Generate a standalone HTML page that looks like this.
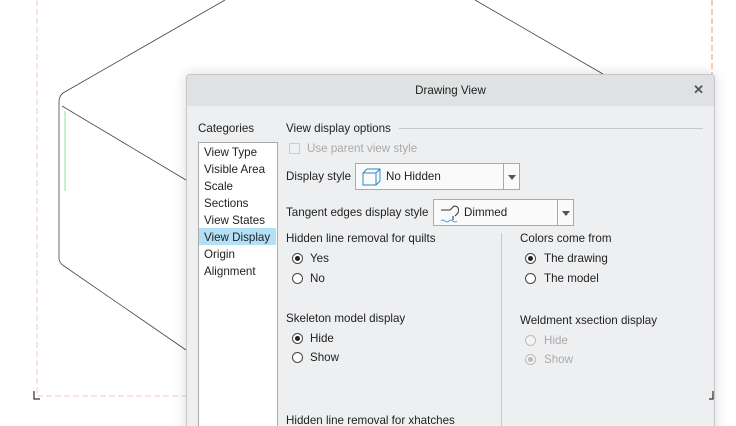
<!DOCTYPE html>
<html style="overflow:hidden;height:426px"><head><style>
body{margin:0;width:736px;height:426px;background:#fff;position:relative;overflow:hidden;font-family:"Liberation Sans",sans-serif;font-size:11.6px;color:#222}
.a{position:absolute;white-space:nowrap}
.dlg{position:absolute;left:186px;top:74px;width:527px;height:360px;background:#eeeff1;border:1px solid #c4c6c9;border-radius:4px 4px 0 0;box-shadow:0 0 14px rgba(0,0,0,.15)}
.tb{position:absolute;left:0;top:0;right:0;height:31px;background:#dfe1e3;border-radius:4px 4px 0 0}
.rad{position:absolute;width:11px;height:11px;border:1px solid #444;border-radius:50%;background:#fff;box-sizing:border-box}
.rad.on::after{content:"";position:absolute;left:2px;top:2px;width:5px;height:5px;border-radius:50%;background:#222}
.dis{color:#aaa}
.rad.d{border-color:#bbb;background:#f3f3f3}
.rad.d.on::after{background:#bbb}
.combo{position:absolute;background:#fafafa;border:1px solid #aaa;box-sizing:border-box}
.arr{position:absolute;top:0;bottom:0;width:15px;border-left:1px solid #aaa}
.arr::after{content:"";position:absolute;left:4px;top:11px;border:4px solid transparent;border-top:5px solid #555;border-bottom:0}
</style></head><body>
<svg class="a" style="left:0;top:0" width="736" height="426">
<line x1="37" y1="0" x2="37" y2="396" stroke="#f3c9c2" stroke-dasharray="6,3"/>
<line x1="37" y1="396" x2="186" y2="396" stroke="#f3c9c2" stroke-dasharray="6,3"/>
<line x1="712" y1="0" x2="712" y2="74" stroke="#f59a6a" stroke-dasharray="6,3"/>
<path d="M225 0 L63 93 Q59 96 59 102 L59 258 Q59 263 64 266 L186 350" fill="none" stroke="#444" stroke-width=".8"/>
<line x1="62" y1="106" x2="186" y2="180" stroke="#444" stroke-width=".8"/>
<line x1="475" y1="0" x2="603" y2="74" stroke="#444" stroke-width=".8"/>
<line x1="65" y1="111" x2="65" y2="191" stroke="#8fe08f" stroke-width="1"/>
<path d="M34 391 V399 H40" fill="none" stroke="#000"/>
</svg>
<div class="dlg">
<div class="tb"></div>
<div class="a" style="left:0;right:0;top:9px;text-align:center">Drawing View</div>
<div class="a" style="right:10px;top:7px;font-weight:bold;font-size:13px;color:#555">✕</div>
<div class="a" style="left:11px;top:47px">Categories</div>
<div style="position:absolute;left:11px;top:67px;width:78px;height:300px;background:#fff;border:1px solid #aaa"></div>
<div class="a" style="left:12px;top:153px;width:77px;height:17px;background:#b3e0f7"></div>
<div class="a" style="left:17px;top:69px;line-height:17px">View Type<br>Visible Area<br>Scale<br>Sections<br>View States<br>View Display<br>Origin<br>Alignment</div>
<div class="a" style="left:99px;top:47px">View display options</div>
<div class="a" style="left:212px;top:53px;width:304px;height:1px;background:#c8c8c8"></div>
<div class="a" style="left:102px;top:68px;width:11px;height:11px;border:1px solid #ccc;box-sizing:border-box"></div>
<div class="a dis" style="left:120px;top:67px">Use parent view style</div>
<div class="a" style="left:99px;top:95px">Display style</div>
<div class="combo" style="left:168px;top:88px;width:165px;height:27px"><svg class="a" style="left:6px;top:4px" width="20" height="18"><path d="M1 5 L5 1 H18 V13 L14 17 H1 Z M1 5 H14 V17 M14 5 L18 1" fill="none" stroke="#2a8ac0" stroke-width="1"/></svg><span class="a" style="left:30px;top:6px">No Hidden</span><div class="arr" style="right:0"></div></div>
<div class="a" style="left:99px;top:131px">Tangent edges display style</div>
<div class="combo" style="left:246px;top:124px;width:141px;height:27px"><svg class="a" style="left:6px;top:3px" width="22" height="20"><path d="M1 7 H10 M10 7 L14 3 Q20 3 18 10 L15 13 M13 13 V17" fill="none" stroke="#333"/><path d="M1 18 Q3 16 5 18 T9 18 T13 18 T17 18" fill="none" stroke="#2a8ac0" stroke-width=".8"/></svg><span class="a" style="left:30px;top:6px">Dimmed</span><div class="arr" style="right:0"></div></div>
<div class="a" style="left:314px;top:158px;width:1px;height:210px;background:#c8c8c8"></div>
<div class="a" style="left:99px;top:157px">Hidden line removal for quilts</div>
<div class="rad on" style="left:105px;top:178px"></div><div class="a" style="left:123px;top:177px">Yes</div>
<div class="rad" style="left:105px;top:198px"></div><div class="a" style="left:123px;top:197px">No</div>
<div class="a" style="left:99px;top:237px">Skeleton model display</div>
<div class="rad on" style="left:105px;top:258px"></div><div class="a" style="left:123px;top:257px">Hide</div>
<div class="rad" style="left:105px;top:277px"></div><div class="a" style="left:123px;top:276px">Show</div>
<div class="a" style="left:99px;top:339px">Hidden line removal for xhatches</div>
<div class="a" style="left:333px;top:157px">Colors come from</div>
<div class="rad on" style="left:338px;top:178px"></div><div class="a" style="left:357px;top:177px">The drawing</div>
<div class="rad" style="left:338px;top:198px"></div><div class="a" style="left:357px;top:197px">The model</div>
<div class="a" style="left:333px;top:239px">Weldment xsection display</div>
<div class="rad d" style="left:338px;top:260px"></div><div class="a dis" style="left:357px;top:259px">Hide</div>
<div class="rad d on" style="left:338px;top:279px"></div><div class="a dis" style="left:357px;top:278px">Show</div>
</div>
<svg class="a" style="left:0;top:0" width="736" height="426"><path d="M713 391 V399 H709" fill="none" stroke="#000"/></svg>
</body></html>
